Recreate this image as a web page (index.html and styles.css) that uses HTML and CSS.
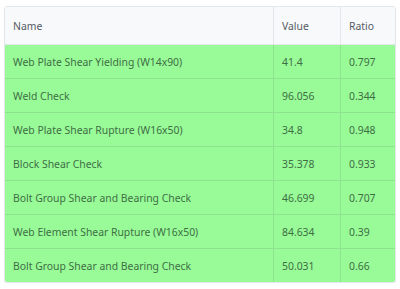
FILE: index.html
```html
<!DOCTYPE html>
<html>
<head>
<meta charset="utf-8">
<link rel="stylesheet" href="styles.css">
</head>
<body>
<div class="card">
<table class="grid">
<thead>
<tr><th class="c-name">Name</th><th class="c-val">Value</th><th class="c-ratio">Ratio</th></tr>
</thead>
<tbody>
<tr><td>Web Plate Shear Yielding (W14x90)</td><td>41.4</td><td>0.797</td></tr>
<tr><td>Weld Check</td><td>96.056</td><td>0.344</td></tr>
<tr><td>Web Plate Shear Rupture (W16x50)</td><td>34.8</td><td>0.948</td></tr>
<tr><td>Block Shear Check</td><td>35.378</td><td>0.933</td></tr>
<tr><td>Bolt Group Shear and Bearing Check</td><td>46.699</td><td>0.707</td></tr>
<tr><td>Web Element Shear Rupture (W16x50)</td><td>84.634</td><td>0.39</td></tr>
<tr><td>Bolt Group Shear and Bearing Check</td><td>50.031</td><td>0.66</td></tr>
</tbody>
</table>
</div>
</body>
</html>
```
FILE: styles.css
```css
html, body { margin: 0; padding: 0; background: #fff; }
body { padding: 6px 4px 0 4px; font-family: "Noto Sans", "Open Sans", sans-serif; }
.card {
  border: 1px solid #e3e6ea;
  border-radius: 3px;
  overflow: hidden;
  box-shadow: 0 1px 2px rgba(0,0,0,0.04);
  width: 392px;
  box-sizing: border-box;
}
.grid { width: 100%; border-collapse: collapse; font-size: 10.4px; }
.grid th {
  background: #f8f9fb;
  color: #555b63;
  font-weight: 400;
  text-align: left;
  height: 37px;
  padding: 0 8px;
  border-bottom: 1px solid #e3e6ea;
}
.grid th + th, .grid td + td { border-left: 1px solid #e3e6ea; }
.grid td + td { border-left-color: #8fe38f; }
.grid td {
  background: #98fb98;
  color: #3f6e44;
  height: 33px;
  padding: 0 8px;
  border-top: 1px solid #8fe38f;
}
.grid tbody tr:first-child td { border-top: none; }
.c-name { width: 252px; }
.c-val { width: 50px; }
```
